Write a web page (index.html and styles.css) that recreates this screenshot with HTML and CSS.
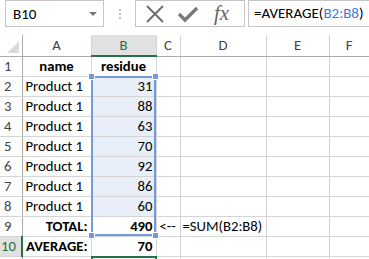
FILE: index.html
```html
<!DOCTYPE html>
<html lang="en">
<head>
    <meta charset="UTF-8">
    <meta name="viewport" content="width=device-width, initial-scale=1.0">
    <title>AVERAGE sheet</title>
    <link rel="stylesheet" href="styles.css">
</head>
<body>
    <!-- Formula bar: name box, buttons, formula -->
    <div class="formula-bar">
        <div class="name-box">
            <span>B10</span>
            <span class="caret"></span>
        </div>
        <div class="grip">
            <span></span><span></span><span></span>
        </div>
        <div class="fx-buttons">
            <svg class="btn-cancel" width="20" height="20" viewBox="0 0 20 20">
                <path d="M2 2 L18 18 M18 2 L2 18" stroke="#6b6b6b" stroke-width="1.8" fill="none"/>
            </svg>
            <svg class="btn-enter" width="22" height="18" viewBox="0 0 22 18">
                <path d="M2 9 L8 15 L20 3" stroke="#7a7a7a" stroke-width="3.4" fill="none"/>
            </svg>
            <span class="btn-fx">fx</span>
        </div>
        <div class="formula">=AVERAGE(<span class="ref">B2:B8</span>)</div>
    </div>

    <!-- Sheet grid -->
    <div class="sheet">
        <table class="grid">
            <colgroup>
                <col class="c-hdr">
                <col class="c-a">
                <col class="c-b">
                <col class="c-c">
                <col class="c-d">
                <col class="c-e">
                <col class="c-f">
            </colgroup>
            <thead>
                <tr>
                    <th class="corner"><span class="tri"></span></th>
                    <th>A</th>
                    <th class="col-on">B</th>
                    <th>C</th>
                    <th>D</th>
                    <th>E</th>
                    <th>F</th>
                </tr>
            </thead>
            <tbody>
                <tr><th>1</th><td class="bold center">name</td><td class="bold center">residue</td><td></td><td></td><td></td><td></td></tr>
                <tr><th>2</th><td>Product 1</td><td class="num sel">31</td><td></td><td></td><td></td><td></td></tr>
                <tr><th>3</th><td>Product 1</td><td class="num sel">88</td><td></td><td></td><td></td><td></td></tr>
                <tr><th>4</th><td>Product 1</td><td class="num sel">63</td><td></td><td></td><td></td><td></td></tr>
                <tr><th>5</th><td>Product 1</td><td class="num sel">70</td><td></td><td></td><td></td><td></td></tr>
                <tr><th>6</th><td>Product 1</td><td class="num sel">92</td><td></td><td></td><td></td><td></td></tr>
                <tr><th>7</th><td>Product 1</td><td class="num sel">86</td><td></td><td></td><td></td><td></td></tr>
                <tr><th>8</th><td>Product 1</td><td class="num sel">60</td><td></td><td></td><td></td><td></td></tr>
                <tr><th>9</th><td class="bold num">TOTAL:</td><td class="bold num">490</td><td class="spill">&lt;--&nbsp;&nbsp;=SUM(B2:B8)</td><td></td><td></td><td></td></tr>
                <tr><th class="row-on">10</th><td class="bold num">AVERAGE:</td><td class="bold num">70</td><td></td><td></td><td></td><td></td></tr>
                <tr><th></th><td></td><td></td><td></td><td></td><td></td><td></td></tr>
            </tbody>
        </table>
        <!-- selected range B2:B8 and active cell B10 -->
        <div class="range">
            <span class="h tl"></span><span class="h tr"></span>
            <span class="h bl"></span><span class="h br"></span>
        </div>
        <div class="active"><span class="fill"></span></div>
    </div>
</body>
</html>
```

FILE: styles.css
```css
body {
    margin: 0;
    background: #fff;
    font-family: Carlito, "Liberation Sans", Arial, sans-serif;
    font-size: 14.7px;
    color: #000;
    overflow: hidden;
}

/* formula bar */
.formula-bar {
    display: flex;
    height: 27px;
    padding-left: 5px;
}
.name-box {
    height: 25px;
    width: 84px;
    border: 1px solid #c6c6c6;
    display: flex;
    align-items: center;
    justify-content: space-between;
    padding: 0 6px 0 7px;
    font-size: 15px;
}
.caret {
    width: 0;
    height: 0;
    border-left: 4px solid transparent;
    border-right: 4px solid transparent;
    border-top: 4px solid #777;
}
.grip {
    width: 31px;
    display: flex;
    flex-direction: column;
    align-items: center;
    justify-content: center;
    gap: 2px;
}
.grip span {
    width: 2px;
    height: 2px;
    background: #bdbdbd;
}
.fx-buttons {
    width: 108px;
    height: 25px;
    border: 1px solid #c6c6c6;
    display: flex;
    align-items: center;
}
.btn-cancel {
    margin-left: 9px;
}
.btn-enter {
    margin-left: 12px;
}
.btn-fx {
    margin-left: 15px;
    font-family: "Liberation Serif", serif;
    font-style: italic;
    font-size: 21px;
    color: #666;
    line-height: 1;
}
.formula {
    flex: 1;
    height: 25px;
    margin-left: 3px;
    border: 1px solid #c6c6c6;
    border-right: none;
    line-height: 25px;
    padding-left: 5px;
    font-size: 15px;
}
.ref {
    color: #3c79d8;
}

/* grid */
.sheet {
    position: relative;
    margin-top: 8px;
}
.grid {
    border-collapse: collapse;
    table-layout: fixed;
    width: 369px;
}
.c-hdr { width: 22px; }
.c-a { width: 69px; }
.c-b { width: 65px; }
.c-c { width: 24px; }
.c-d { width: 86px; }
.c-e { width: 63px; }
.c-f { width: 40px; }

.grid tr {
    height: 20px;
}
.grid td,
.grid th {
    border: 1px solid #d4d4d4;
    padding: 0 3px;
    white-space: nowrap;
    overflow: visible;
    line-height: 19px;
}
.grid thead th {
    height: 20px;
    font-weight: normal;
    color: #444;
    border-top: none;
    border-bottom: 1px solid #ababab;
}
.grid tbody th {
    font-weight: normal;
    color: #444;
    text-align: left;
    padding-left: 4px;
    border-left: none;
    border-right: 1px solid #ababab;
}
.grid thead th.corner {
    position: relative;
    border-left: none;
    border-right: 1px solid #ababab;
}
.tri {
    position: absolute;
    right: 3px;
    bottom: 3px;
    width: 0;
    height: 0;
    border-left: 12px solid transparent;
    border-bottom: 12px solid #dcdcdc;
}
.grid thead th.col-on {
    background: #e1e1e1;
    color: #217346;
    border-bottom: 2px solid #217346;
}
.grid tbody th.row-on {
    background: #e1e1e1;
    color: #217346;
    border-right: 2px solid #217346;
    padding-left: 1px;
}

.bold { font-weight: bold; }
.center { text-align: center; }
.num { text-align: right; }
.sel { background: #e9eff9; }
.spill {
    padding-left: 2px;
    border-right-style: hidden;
}

/* selection overlays */
.range {
    position: absolute;
    left: 91px;
    top: 41px;
    width: 65px;
    height: 160px;
    border: 2px solid #7599dc;
    box-sizing: border-box;
}
.h {
    position: absolute;
    width: 5px;
    height: 5px;
    background: #7599dc;
    border: 1px solid #fff;
}
.tl { left: -5px; top: -5px; }
.tr { right: -5px; top: -5px; }
.bl { left: -5px; bottom: -5px; }
.br { right: -5px; bottom: -5px; }
.active {
    position: absolute;
    left: 91px;
    top: 221px;
    width: 66px;
    height: 21px;
    border: 2px solid #217346;
    box-sizing: border-box;
}
.fill {
    position: absolute;
    right: -4px;
    bottom: -4px;
    width: 5px;
    height: 5px;
    background: #217346;
    border: 1px solid #fff;
}
```
